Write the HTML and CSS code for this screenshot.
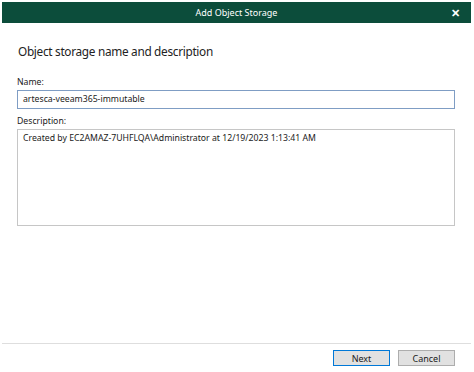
FILE: index.html
```html
<!DOCTYPE html>
<html>
<head>
<meta charset="utf-8">
<link rel="stylesheet" href="styles.css">
</head>
<body>
<div class="window">
  <div class="titlebar">
    <span class="title">Add Object Storage</span>
    <span class="close">✕</span>
  </div>
  <div class="content">
    <h1 class="heading">Object storage name and description</h1>
    <label class="label">Name:</label>
    <div class="input">artesca-veeam365-immutable</div>
    <label class="label">Description:</label>
    <div class="textarea">Created by EC2AMAZ-7UHFLQA\Administrator at 12/19/2023 1:13:41 AM</div>
  </div>
  <div class="footer">
    <button class="btn primary">Next</button>
    <button class="btn">Cancel</button>
  </div>
</div>
</body>
</html>
```
FILE: styles.css
```css
html, body {
  margin: 0;
  padding: 0;
  background: #ffffff;
}
body {
  font-family: "Noto Sans", "Open Sans", sans-serif;
  color: #1a1a1a;
}
.window {
  width: 474px;
  height: 372px;
  display: flex;
  flex-direction: column;
  box-sizing: border-box;
  padding: 2px 3px 0 2px;
}
.titlebar {
  height: 21px;
  flex: none;
  background: #0c4d3b;
  display: flex;
  align-items: center;
  justify-content: center;
  position: relative;
  color: #ffffff;
}
.title {
  font-size: 9px;
}
.close {
  position: absolute;
  right: 11px;
  top: 3px;
  font-size: 11px;
  font-weight: bold;
}
.content {
  flex: 1;
  display: flex;
  flex-direction: column;
  padding: 0 16px 0 15px;
}
.heading {
  font-weight: normal;
  font-size: 11.8px;
  letter-spacing: -0.3px;
  margin: 19px 0 0 1px;
  line-height: 18px;
  color: #222;
}
.label {
  font-size: 8.7px;
  margin-top: 16px;
  line-height: 12px;
  color: #1a1a1a;
}
.input {
  margin-top: 2px;
  height: 19px;
  box-sizing: border-box;
  border: 1px solid #7f9dc4;
  font-size: 8.7px;
  line-height: 17px;
  padding-left: 5px;
}
.input + .label { margin-top: 6px; }
.textarea {
  margin-top: 2px;
  height: 97px;
  box-sizing: border-box;
  border: 1px solid #c6c6c6;
  font-size: 8.7px;
  line-height: 12px;
  padding: 2px 5px;
}
.footer {
  flex: none;
  box-sizing: border-box;
  border-top: 1px solid #dedede;
  height: 29px;
  display: flex;
  justify-content: flex-end;
  align-items: flex-start;
  gap: 8px;
  padding: 6px 16px 0 0;
}
.btn {
  width: 57px;
  height: 16px;
  box-sizing: border-box;
  background: #e1e1e1;
  border: 1px solid #adadad;
  font-family: "Noto Sans", "Open Sans", sans-serif;
  font-size: 9px;
  padding: 0;
  color: #1a1a1a;
}
.btn.primary {
  border-color: #0078d7;
}
```
